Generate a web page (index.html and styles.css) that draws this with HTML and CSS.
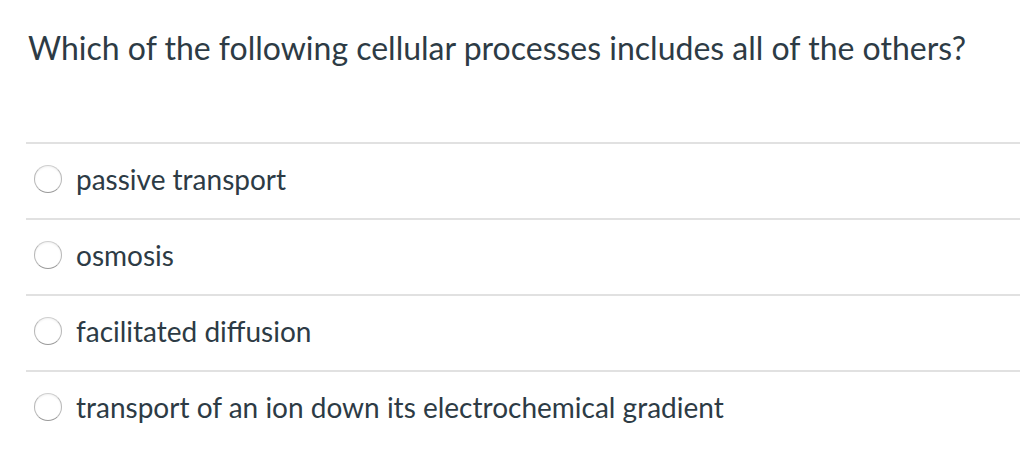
FILE: index.html
```html
<!DOCTYPE html>
<html>
<head>
<meta charset="utf-8">
<link rel="stylesheet" href="styles.css">
</head>
<body>
<div class="quiz">
  <div class="question">Which of the following cellular processes includes all of the others?</div>
  <div class="answers">
    <label class="answer"><span class="radio"></span><span class="text">passive transport</span></label>
    <label class="answer"><span class="radio"></span><span class="text">osmosis</span></label>
    <label class="answer"><span class="radio"></span><span class="text">facilitated diffusion</span></label>
    <label class="answer"><span class="radio"></span><span class="text">transport of an ion down its electrochemical gradient</span></label>
  </div>
</div>
</body>
</html>
```
FILE: styles.css
```css
html, body {
  margin: 0;
  padding: 0;
  background: #fff;
}
body {
  font-family: Lato, "Open Sans", sans-serif;
  color: #2d3b45;
}
.quiz {
  padding-top: 26px;
}
.question {
  font-size: 32px;
  line-height: 44px;
  padding-left: 28px;
  height: 116px;
}
.answers {
  margin-left: 26px;
}
.answer {
  display: flex;
  align-items: center;
  height: 70px;
  padding-bottom: 4px;
  border-top: 2px solid #e1e1e1;
  gap: 14px;
  padding-left: 8px;
}
.radio {
  width: 26px;
  height: 26px;
  border-radius: 50%;
  border: 1px solid #b8b8b8;
  border-top-color: #cfcfcf;
  border-bottom-color: #9a9a9a;
  box-shadow: inset 0 1px 2px rgba(0,0,0,0.06);
  background: #fff;
  flex: none;
}
.text {
  font-size: 28px;
  line-height: 34px;
}
```
